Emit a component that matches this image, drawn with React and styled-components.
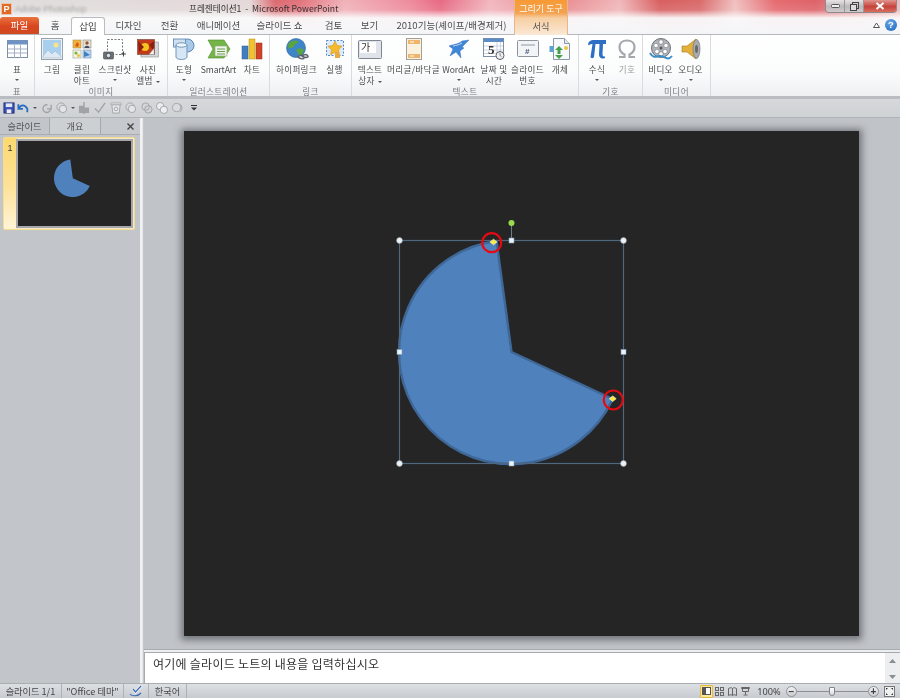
import React from "react";
import styled, { createGlobalStyle } from "styled-components";

const Global = createGlobalStyle`
  html, body { margin: 0; padding: 0; background: #c0c3c8; }
  body { font-family: "Noto Sans CJK KR", "Noto Sans", sans-serif; color: #3f4144; overflow: hidden; }
  * { box-sizing: border-box; }
`;

const Page = styled.div`
  width: 900px; height: 698px; display: flex; flex-direction: column; overflow: hidden;
  background: #c0c3c8; filter: blur(0.3px);
`;
const Top = styled.div`
  height: 35px; display: flex; flex-direction: column; position: relative;
  background:
    linear-gradient(to bottom, rgba(250,250,251,0) 0, rgba(250,250,251,.1) 10px, rgba(250,250,251,.95) 18px, #f4f5f7 35px),
    linear-gradient(to right, #dfdcdc 0, #e2dcdc 90px, #e4d8d8 250px, #dc6a70 275px, #e2737c 300px, #f0b3ba 345px, #ee8b9c 410px, #e76a82 440px, #f2b7bf 490px, #e98a90 560px, #f0b8ba 620px, #d85f60 660px, #d96a6a 700px, #f0c0c0 735px, #e56b70 775px, #dd6368 815px, #f0bcbc 900px);
`;
const BgGhost = styled.div`
  position: absolute; left: 15px; top: 2px; font: 9px/14px "Liberation Sans", sans-serif; color: #a9a9a9; filter: blur(.8px); white-space: nowrap;
`;
const TitleBar = styled.div`
  height: 17px; display: flex; align-items: center; position: relative; padding-left: 1px;
`;
const AppIcon = styled.div`
  width: 11px; height: 12px; border-radius: 1px; background: #e06a24; color: #fff; border: 1px solid #f3c3a8;
  font: bold 9px/10px "Liberation Sans", sans-serif; text-align: center;
`;
const Title = styled.div`
  position: absolute; left: 189px; top: 1px; font-size: 8.65px; line-height: 15px; color: #333; white-space: pre;
`;
const WinControls = styled.div`
  position: absolute; right: 3px; top: 0; width: 72px; height: 13px; display: flex;
  border: 1px solid #8b8b8f; border-top: 0; border-radius: 0 0 4px 4px; overflow: hidden;
`;
const WinBtn = styled.div`
  width: ${p => p.$w}px; height: 100%; display: flex; align-items: center; justify-content: center;
  background: ${p => p.$close ? "linear-gradient(#e0968f,#c5433a 55%,#d86f5f)" : "linear-gradient(#e8e4e4,#bdb9ba 55%,#cfcccc)"};
  border-right: ${p => p.$close ? "0" : "1px solid #98989a"};
`;
const Tabs = styled.div`
  height: 18px; display: flex; align-items: flex-end; position: relative; border-bottom: 1px solid #b4b7bb;
`;
const FileTab = styled.div`
  width: 39px; height: 17px; border-radius: 3px 3px 0 0; color: #fff; font-size: 9.5px; line-height: 17px; text-align: center;
  background: linear-gradient(#e9733d, #d9461f 55%, #ce4a22);
`;
const Tab = styled.div`
  width: ${p => p.$w}px; height: ${p => p.$active ? 18 : 17}px; font-size: 9.5px; line-height: 17px; text-align: center; white-space: nowrap;
  color: ${p => p.$active ? "#444" : "#4b4d50"}; position: relative; flex: none;
  ${p => p.$active && `background: #fff; border: 1px solid #b9bcc0; border-bottom: 0; border-radius: 3px 3px 0 0; margin-bottom: -1px; z-index: 1;`}
`;
const ContextTab = styled.div`
  position: absolute; left: 514px; top: -17px; width: 54px; height: 35px; display: flex; flex-direction: column; align-items: center;
  background: linear-gradient(#f79a35 0, #f4a250 13px, #f7cfa2 18px, #fae8d6 35px);
  border-left: 1px solid #e6b78a; border-right: 1px solid #e6b78a;
`;
const ContextTitle = styled.div`
  height: 17px; font-size: 9px; line-height: 17px; color: #fff; white-space: nowrap;
`;
const ContextName = styled.div`
  height: 18px; font-size: 9.2px; line-height: 18px; color: #55514d;
`;
const TopRight = styled.div`
  position: absolute; right: 3px; top: 2px; display: flex; align-items: center; gap: 5px;
`;
const HelpBtn = styled.div`
  width: 12px; height: 12px; border-radius: 50%; background: radial-gradient(circle at 40% 30%, #6aa7e6, #1a64c0); color: #fff;
  font: bold 9.5px/12px "Liberation Sans", sans-serif; text-align: center;
`;
const Ribbon = styled.div`
  height: 64px; display: flex; flex: none; background: linear-gradient(#ffffff 0, #fbfcfc 60%, #eff0f2 100%);
  border-bottom: 3px solid #b9bcc1;
`;
const Group = styled.div`
  width: ${p => p.$w}px; flex: none; display: flex; flex-direction: column; border-right: 1px solid #d9dbde;
`;
const Items = styled.div`
  height: 51px; flex: none; display: flex; padding-left: ${p => p.$pad || 0}px;
`;
const Item = styled.div`
  width: ${p => p.$w}px; flex: none; display: flex; flex-direction: column; align-items: center; padding-top: 2px;
`;
const IconBox = styled.div`
  height: 24px; display: flex; align-items: center; justify-content: center; margin-bottom: 3px;
`;
const ItemText = styled.div`
  font-size: 8.6px; line-height: 11px; color: ${p => p.$muted ? "#9a9c9f" : "#4a4c4f"}; text-align: center; white-space: nowrap;
  letter-spacing: ${p => p.$latin ? "-.1px" : ".3px"};
`;
const BelowCaret = styled.div`
  height: 9px; line-height: 9px; display: flex; align-items: center; justify-content: center;
`;
const Caret = styled.span`
  display: inline-block; width: 0; height: 0; border: 2px solid transparent; border-top: 2.5px solid #555; border-bottom: 0; vertical-align: middle; margin-left: ${p => p.$ml ?? 0}px;
`;
const GroupLabel = styled.div`
  height: 10px; font-size: 8.6px; line-height: 10px; color: #7a7c80; text-align: center; letter-spacing: .4px;
`;
const QatBar = styled.div`
  height: 19px; flex: none; display: flex; align-items: center; padding-left: 3px;
  background: linear-gradient(#d6d8db, #cfd2d5); border-bottom: 1px solid #b0b3b7;
`;
const QatSlot = styled.div`
  width: ${p => p.$w || 14.5}px; height: 15px; flex: none; display: flex; align-items: center; justify-content: center;
`;
const Main = styled.div`
  flex: 1; display: flex; min-height: 0;
`;
const LeftPane = styled.div`
  width: 140px; flex: none; display: flex; flex-direction: column; background: #c2c5ca;
`;
const PaneTabs = styled.div`
  height: 17px; flex: none; display: flex; background: #c6c9cd; border-bottom: 1px solid #a9acb0;
`;
const PaneTab = styled.div`
  width: ${p => p.$w}px; font-size: 9.2px; line-height: 16px; text-align: center; flex: none;
  background: ${p => p.$active ? "#c2c5c9" : "#cdd0d3"}; border-right: 1px solid #a5a8ac; color: #505255;
`;
const PaneClose = styled.div`
  flex: 1; display: flex; align-items: center; justify-content: flex-end; padding-right: 6px;
`;
const ThumbRow = styled.div`
  margin: 2px 0 0 3px; width: 132px; height: 93px; flex: none; display: flex; border: 1px solid #f6dc8e; border-radius: 2px;
  background: linear-gradient(to bottom, #fdd96f 0, #fde29a 55%, #fff5d6 100%) left/13px 100% no-repeat, #f3e8c8;
  padding: 1px 1px 1px 0;
`;
const ThumbNum = styled.div`
  width: 12px; flex: none; font: 9px/14px "Liberation Sans", sans-serif; color: #3a3a3a; text-align: center; padding-top: 2px;
`;
const Thumb = styled.div`
  flex: 1; min-width: 0; background: #252525; border: 2px solid #a5a7aa; display: flex; align-items: stretch; justify-content: center;
`;
const ThumbArt = styled.svg`
  width: 100%; height: 100%; display: block;
`;
const Splitter = styled.div`
  width: 4px; flex: none; background: linear-gradient(to right, #eef0f1, #f4f5f6 50%, #b5b8bc);
`;
const RightCol = styled.div`
  flex: 1; display: flex; flex-direction: column; min-width: 0;
`;
const Canvas = styled.div`
  flex: 1; min-height: 0; background: #c0c3c8; padding: 13px 0 0 40px; border-bottom: 1px solid #a8abaf;
`;
const Slide = styled.div`
  width: 675px; height: 505px; background: #252525; position: relative;
  box-shadow: 0 1px 7px 3px rgba(62,64,70,.6);
`;
const NotesDivider = styled.div`
  height: 2px; flex: none; background: #eceef0;
`;
const Notes = styled.div`
  height: 31px; flex: none; display: flex; background: #fff; border-left: 1px solid #a6a9ad; border-top: 1px solid #a6a9ad;
`;
const NotesText = styled.div`
  flex: 1; padding: 3px 0 0 8px; font-size: 12px; line-height: 16px; color: #333; letter-spacing: .25px;
`;
const NotesScroll = styled.div`
  width: 15px; flex: none; background: #eceef0; display: flex; flex-direction: column; justify-content: space-between; align-items: center; padding: 6px 0 4px;
`;
const Status = styled.div`
  height: 15px; flex: none; display: flex; align-items: center; font-size: 9.2px; color: #45474a;
  background: linear-gradient(#dde0e3, #c7cacf); border-top: 1px solid #a9acb0;
`;
const StatusCell = styled.div`
  width: ${p => p.$w}px; height: 100%; flex: none; display: flex; align-items: center; justify-content: center; white-space: nowrap;
  border-right: 1px solid #aeb1b5; line-height: 14px;
`;
const StatusSpacer = styled.div`flex: 1;`;
const ViewBtn = styled.div`
  width: 13px; height: 13px; flex: none; display: flex; align-items: center; justify-content: center;
  ${p => p.$active && `background: #fde79a; border: 1px solid #e8b93b; border-radius: 1px;`}
`;
const FitBtn = styled.div`
  width: 15px; height: 13px; flex: none; margin: 0 3px 0 3px; display: flex; align-items: center; justify-content: center;
`;
const ZoomText = styled.div`
  width: 34px; text-align: center; font-size: 9.2px; flex: none; font-family: "Noto Sans", sans-serif;
`;
const ZoomCircle = styled.div`
  width: 11px; height: 11px; flex: none; border-radius: 50%; border: 1px solid #8d9094; background: linear-gradient(#f2f3f4, #c9ccd0);
  color: #3d3f42; font: bold 10px/9px "Liberation Sans", sans-serif; text-align: center;
`;
const ZoomTrack = styled.div`
  width: 71px; height: 1px; flex: none; background: #8c8f93; position: relative;
`;
const ZoomThumb = styled.div`
  position: absolute; left: 32px; top: -4px; width: 6px; height: 9px; background: linear-gradient(#fff, #d8dade); border: 1px solid #7f8286; border-radius: 1px 1px 3px 3px;
`;
const MathGlyph = styled.svg`
  width: ${p => p.$w}px; height: 22px; display: block;
`;
const SelectionArt = styled.svg`
  position: absolute; left: 0; top: 0; width: 675px; height: 505px; overflow: visible;
`;

const Ic = ({ w = 22, h = 22, children }) => <svg width={w} height={h} viewBox={`0 0 ${w} ${h}`} fill="none">{children}</svg>;

const TableIcon = () => (
  <Ic w={21} h={18}>
    <rect x="0.5" y="0.5" width="20" height="17" fill="#fff" stroke="#7f8fa6" />
    <rect x="0.5" y="0.5" width="20" height="4" fill="#6f94c4" />
    <path d="M7.5 5v13M13.5 5v13M1 9h19M1 13h19" stroke="#a4b1c4" />
  </Ic>
);
const PictureIcon = () => (
  <Ic>
    <rect x="0.5" y="0.5" width="21" height="21" fill="#eef1f4" stroke="#9aa3ad" />
    <rect x="2" y="2" width="18" height="18" fill="#a9cfee" />
    <circle cx="15" cy="7" r="2.5" fill="#fbe389" />
    <path d="M2 18l5-6 4 4 3-3 6 5v2H2z" fill="#dfe9f3" stroke="#8fb0cf" strokeWidth=".5" />
  </Ic>
);
const ClipIcon = () => (
  <Ic w={20} h={20}>
    <rect x="1" y="1" width="8" height="8" fill="#f2b338" stroke="#a88f5b" strokeWidth=".6" />
    <path d="M3 7l2-4 2 2-1 3z" fill="#d95a26" />
    <rect x="11" y="1" width="8" height="8" fill="#e5e1d3" stroke="#8a8a80" strokeWidth=".6" />
    <circle cx="15" cy="4" r="1.7" fill="#a0522d" /><path d="M12.5 9c0-3 5-3 5 0z" fill="#3d4a6b" />
    <rect x="1" y="11" width="8" height="8" fill="#f4f4e4" stroke="#9aa08a" strokeWidth=".6" />
    <circle cx="4" cy="14" r="1.6" fill="#7cb342" /><circle cx="6.5" cy="16.5" r="1.6" fill="#e8c64a" />
    <rect x="11" y="11" width="8" height="8" fill="#b9d4ee" stroke="#6e8fae" strokeWidth=".6" />
    <path d="M12 12l6 4-6 2z" fill="#3f7fc0" />
  </Ic>
);
const ScreenIcon = () => (
  <Ic w={24} h={22}>
    <rect x="4.5" y="1.5" width="15" height="15" stroke="#777" strokeDasharray="2 1.5" />
    <rect x="0.5" y="14" width="10" height="7" rx="1" fill="#6d7176" stroke="#43464a" strokeWidth=".6" />
    <circle cx="5.5" cy="17.5" r="2.2" fill="#d7e3ee" stroke="#33363a" strokeWidth=".7" />
    <path d="M18 16h5M20.5 13.5v5" stroke="#444" />
  </Ic>
);
const AlbumIcon = () => (
  <Ic w={22} h={20}>
    <rect x="4" y="3" width="17.5" height="15" fill="#d3d6da" stroke="#8e8f92" strokeWidth=".6" />
    <rect x="0.5" y="0.5" width="17" height="15" fill="#c23a1a" stroke="#6d4333" strokeWidth=".6" />
    <circle cx="8" cy="8" r="4" fill="#f6c51d" />
    <path d="M1 2l6 6-5 5zM17 2l-5 4 5 6z" fill="#8c1f10" />
    <path d="M12 15.5l5-6v6z" fill="#f6f6f6" stroke="#999" strokeWidth=".5" />
  </Ic>
);
const ShapesIcon = () => (
  <Ic>
    <circle cx="14.5" cy="7.5" r="6.5" fill="#a9c9e8" stroke="#5c89b8" />
    <rect x="0.5" y="1" width="12" height="8" fill="#cfe0f1" stroke="#6f95bc" />
    <path d="M3 7v12c0 1.3 2.5 2.5 5.5 2.5S14 20.3 14 19V7z" fill="#d7e6f4" stroke="#6f95bc" />
    <ellipse cx="8.5" cy="7" rx="5.5" ry="2.2" fill="#eef5fb" stroke="#6f95bc" />
  </Ic>
);
const SmartIcon = () => (
  <Ic w={24} h={20}>
    <path d="M1 1h16l6 9-6 9H1l5-9z" fill="#75b548" stroke="#4f8a2b" strokeWidth=".6" />
    <rect x="8" y="7" width="12" height="10" fill="#eef4e8" stroke="#8aa676" strokeWidth=".6" />
    <path d="M10 10h8M10 12.5h8M10 15h8" stroke="#6d9a55" />
  </Ic>
);
const ChartIcon = () => (
  <Ic>
    <rect x="1" y="8" width="6" height="13" fill="#3f7fbf" stroke="#2d5f90" strokeWidth=".5" />
    <rect x="8" y="1" width="6" height="20" fill="#f2c22e" stroke="#b58e14" strokeWidth=".5" />
    <rect x="15" y="5" width="6" height="16" fill="#cf4327" stroke="#98301b" strokeWidth=".5" />
  </Ic>
);
const GlobeIcon = () => (
  <Ic w={24} h={22}>
    <circle cx="11" cy="10" r="9.5" fill="#3f86c9" stroke="#27618f" strokeWidth=".6" />
    <path d="M4 5c3-3 7-3 9-2 0 3-3 2-4 5s-4 1-5 3c-1-2-1-4 0-6zM12 11c3-1 6 0 7 1-1 3-3 6-5 6 0-3-3-4-2-7z" fill="#5aa53c" />
    <path d="M13 19c2-2.5 5-2.5 6 0s-4 2.5-6 0zM17 18c2-2 5-2 6 0s-4 2-6 0z" stroke="#5a6068" strokeWidth="1.3" fill="#d9dce0" />
  </Ic>
);
const ActionIcon = () => (
  <Ic w={20} h={20}>
    <rect x="1.5" y="1.5" width="17" height="15" fill="#dfeaf6" stroke="#4c8bd0" strokeDasharray="2 1.5" />
    <path d="M10 2l2.2 4.500 5 .7-3.600 3.500.8 5L10 13.300 5.600 15.700l.8-5L2.800 7.200l5-.7z" fill="#f4ba2c" stroke="#c88a13" strokeWidth=".5" />
    <path d="M10 14c1-2 2-2 3 0l2 1v4h-5z" fill="#e9a942" />
  </Ic>
);
const TextBoxIcon = () => (
  <Ic w={24} h={19}>
    <rect x="0.5" y="0.5" width="23" height="18" rx="1" fill="#dfe4ea" stroke="#7f868e" />
    <path d="M2 2h16v11H2z" fill="#fff" />
    <text x="3" y="11" fontSize="10" fill="#333" fontFamily="Noto Sans CJK KR">가</text>
  </Ic>
);
const HeaderIcon = () => (
  <Ic w={18} h={22}>
    <rect x="1.5" y="0.5" width="15" height="21" fill="#faf1df" stroke="#a3a09a" />
    <rect x="3" y="2" width="12" height="4" fill="#efb56b" />
    <rect x="3" y="16" width="12" height="4" fill="#efb56b" />
    <path d="M5 4h4M5 18h4" stroke="#fff" />
  </Ic>
);
const WordArtIcon = () => (
  <Ic w={22} h={20}>
    <path d="M1 7c6-2 10-2 13-5l7-1-7 7 2 1-4 3 1 7-5-6-6 4 3-7z" fill="#3e86d8" stroke="#2a68b0" strokeWidth=".4" />
    <path d="M5 7c3-.5 6-1 9-3" stroke="#bcd9f5" />
  </Ic>
);
const DateIcon = () => (
  <Ic>
    <rect x="0.5" y="0.5" width="20" height="18" fill="#fff" stroke="#7f8fa6" />
    <rect x="0.5" y="0.5" width="20" height="3.5" fill="#5c8cc6" />
    <path d="M14 4v14M17.500 4v14M1 8h19M1 12h19M1 15.500h19" stroke="#b7c4d6" strokeWidth=".7" />
    <text x="5" y="16" fontSize="13" fontWeight="700" fontFamily="Liberation Serif" fill="#333">5</text>
    <circle cx="17" cy="17.5" r="4" fill="#eef0f2" stroke="#5b6167" />
    <path d="M17 15v2.500l1.500 1" stroke="#444" strokeWidth=".6" />
  </Ic>
);
const NumberIcon = () => (
  <Ic w={22} h={18}>
    <rect x="0.5" y="0.5" width="21" height="16" rx="1" fill="#f2f4f7" stroke="#8d949c" />
    <rect x="4" y="4" width="14" height="2" fill="#c3c7cd" />
    <text x="8" y="14" fontSize="8" fontWeight="700" fontFamily="Liberation Sans" fill="#44587a">#</text>
  </Ic>
);
const ObjectIcon = () => (
  <Ic>
    <path d="M4.500 0.500h11l5 5v16h-16z" fill="#f6f8fb" stroke="#8c98a8" />
    <path d="M15.500 0.500v5h5" fill="#dfe6ee" stroke="#8c98a8" />
    <path d="M10 8l-4 4h2.500v4h3v-4H14z" fill="#46a04a" />
    <path d="M10 21l-4-4h8z" fill="#46a04a" />
    <rect x="0.5" y="8" width="4" height="6" fill="#5aa3d8" />
    <circle cx="17" cy="10" r="2" fill="#e8c64a" />
  </Ic>
);
const VideoIcon = () => (
  <Ic w={24} h={23}>
    <circle cx="12" cy="10" r="9.5" fill="#aeb4ba" stroke="#6b7177" />
    {[[12,4],[7,7.5],[17,7.5],[8,13.5],[16,13.5],[12,16]].map(([x, y]) => <circle key={x + "," + y} cx={x} cy={y} r="2.2" fill="#fff" stroke="#5f656b" strokeWidth=".5" />)}
    <circle cx="12" cy="10" r="1.5" fill="#555" />
    <path d="M1 15c4 7 8 2 11 3 4 1 7 5 11 0" stroke="#3c90c9" strokeWidth="2" />
  </Ic>
);
const AudioIcon = () => (
  <Ic w={20} h={22}>
    <path d="M1 8h5l9-7c2 3 2 17 0 20l-9-7H1z" fill="#e3b13b" stroke="#a27c1b" strokeWidth=".6" />
    <ellipse cx="15.5" cy="11" rx="3.5" ry="9.5" fill="#a9abae" stroke="#6a6c6f" strokeWidth=".6" />
    <ellipse cx="15.5" cy="11" rx="1.5" ry="4" fill="#66686b" />
  </Ic>
);
const PiIcon = () => (
  <MathGlyph $w={20} viewBox="0 0 20 22" fill="none">
    <path d="M1 6c1-3 3-4 5-4h13v4h-3l-.5 10c0 2 .5 2.500 2.500 2.500v1.500c-3 1.500-6 0-6-3.500L12.500 6H8.500L7 19c-.2 1.500-3.500 1.500-3.500 0L5.500 6C4 6 2.500 6.500 1.800 7.500z" fill="#2c6fc4" />
  </MathGlyph>
);
const OmegaIcon = () => (
  <MathGlyph $w={20} viewBox="0 0 20 22" fill="none">
    <path d="M2 19h5.500v-2.500C4.500 15 2.500 12.500 2.500 9 2.500 5 5.500 2.500 10 2.500S17.500 5 17.500 9c0 3.500-2 6-5 7.500V19H18" stroke="#a4a8ac" strokeWidth="2.2" />
  </MathGlyph>
);

const RibbonItem = ({ w, icon, lines, caret, muted, latin }) => (
  <Item $w={w}>
    <IconBox>{icon}</IconBox>
    {lines.map((l, i) => <ItemText key={i} $muted={muted} $latin={latin}>{l}{caret === "inline" && i === lines.length - 1 && <Caret $ml={3} />}</ItemText>)}
    {caret === "below" && <BelowCaret><Caret /></BelowCaret>}
  </Item>
);

const Q = ({ children }) => <svg width="12" height="12" viewBox="0 0 13 13" fill="none">{children}</svg>;
const gc = "#a0a4a8";
const Disc = () => <Q><circle cx="5.5" cy="5.5" r="4.5" fill="#d9dbde" stroke={gc} /><circle cx="7.5" cy="7.5" r="4" fill="#e3e5e7" stroke={gc} /></Q>;

const pieD = "M312.5 110 A112 112 0 1 0 428.7 268 L327.5 221 Z";

const Handle = ({ x, y, sq }) => sq
  ? <rect x={x - 2.5} y={y - 2.5} width="5" height="5" fill="#eaf3fb" stroke="#7f98b0" strokeWidth=".6" />
  : <circle cx={x} cy={y} r="2.9" fill="#eef1f3" stroke="#8ea2b4" strokeWidth=".6" />;
const Diamond = ({ x, y }) => <path d={`M${x - 3.5} ${y}L${x} ${y - 2.8}L${x + 3.5} ${y}L${x} ${y + 2.8}Z`} fill="#fbea3c" stroke="#fffbe0" strokeWidth=".6" />;
const Ring = ({ x, y }) => <circle cx={x} cy={y} r="9.5" fill="none" stroke="#e60b12" strokeWidth="2.2" />;

export default function App() {
  return (
    <Page>
      <Global />
      <Top>
        <TitleBar>
          <AppIcon>P</AppIcon>
          <BgGhost>Adobe Photoshop</BgGhost>
          <Title>프레젠테이션1  -  Microsoft PowerPoint</Title>
          <WinControls>
            <WinBtn $w={20}><svg width="9" height="4"><rect x=".5" y=".5" width="8" height="3" rx="1" fill="#eee" stroke="#555" /></svg></WinBtn>
            <WinBtn $w={19}><svg width="9" height="9" fill="none"><rect x="2.5" y=".5" width="6" height="6" stroke="#444" /><rect x=".5" y="2.5" width="6" height="6" fill="#ddd" stroke="#444" /></svg></WinBtn>
            <WinBtn $w={33} $close><svg width="10" height="8"><path d="M1.5 1l7 6M8.500 1l-7 6" stroke="#fff" strokeWidth="2" /></svg></WinBtn>
          </WinControls>
        </TitleBar>
        <Tabs>
          <FileTab>파일</FileTab>
          <Tab $w={32}>홈</Tab>
          <Tab $w={34} $active>삽입</Tab>
          <Tab $w={47}>디자인</Tab>
          <Tab $w={35}>전환</Tab>
          <Tab $w={63}>애니메이션</Tab>
          <Tab $w={59}>슬라이드 쇼</Tab>
          <Tab $w={49}>검토</Tab>
          <Tab $w={23}>보기</Tab>
          <Tab $w={141}>2010기능(셰이프/배경제거)</Tab>
          <ContextTab>
            <ContextTitle>그리기 도구</ContextTitle>
            <ContextName>서식</ContextName>
          </ContextTab>
          <TopRight>
            <svg width="7" height="6" fill="none"><path d="M.5 5.500L3.500 1l3 4.500z" fill="#fff" stroke="#555" /></svg>
            <HelpBtn>?</HelpBtn>
          </TopRight>
        </Tabs>
      </Top>
      <Ribbon>
        <Group $w={35}>
          <Items><RibbonItem w={34} icon={<TableIcon />} lines={["표"]} caret="below" /></Items>
          <GroupLabel>표</GroupLabel>
        </Group>
        <Group $w={133}>
          <Items $pad={2}>
            <RibbonItem w={30} icon={<PictureIcon />} lines={["그림"]} />
            <RibbonItem w={30} icon={<ClipIcon />} lines={["클립", "아트"]} />
            <RibbonItem w={36} icon={<ScreenIcon />} lines={["스크린샷"]} caret="below" />
            <RibbonItem w={30} icon={<AlbumIcon />} lines={["사진", "앨범"]} caret="inline" />
          </Items>
          <GroupLabel>이미지</GroupLabel>
        </Group>
        <Group $w={102}>
          <Items>
            <RibbonItem w={32} icon={<ShapesIcon />} lines={["도형"]} caret="below" />
            <RibbonItem w={37} icon={<SmartIcon />} lines={["SmartArt"]} latin />
            <RibbonItem w={30} icon={<ChartIcon />} lines={["차트"]} />
          </Items>
          <GroupLabel>일러스트레이션</GroupLabel>
        </Group>
        <Group $w={82}>
          <Items $pad={3}>
            <RibbonItem w={47} icon={<GlobeIcon />} lines={["하이퍼링크"]} />
            <RibbonItem w={29} icon={<ActionIcon />} lines={["실행"]} />
          </Items>
          <GroupLabel>링크</GroupLabel>
        </Group>
        <Group $w={227}>
          <Items>
            <RibbonItem w={36} icon={<TextBoxIcon />} lines={["텍스트", "상자"]} caret="inline" />
            <RibbonItem w={51} icon={<HeaderIcon />} lines={["머리글/바닥글"]} />
            <RibbonItem w={39} icon={<WordArtIcon />} lines={["WordArt"]} caret="below" latin />
            <RibbonItem w={32} icon={<DateIcon />} lines={["날짜 및", "시간"]} />
            <RibbonItem w={35} icon={<NumberIcon />} lines={["슬라이드", "번호"]} />
            <RibbonItem w={30} icon={<ObjectIcon />} lines={["개체"]} />
          </Items>
          <GroupLabel>텍스트</GroupLabel>
        </Group>
        <Group $w={64}>
          <Items $pad={2}>
            <RibbonItem w={32} icon={<PiIcon />} lines={["수식"]} caret="below" />
            <RibbonItem w={28} icon={<OmegaIcon />} lines={["기호"]} muted />
          </Items>
          <GroupLabel>기호</GroupLabel>
        </Group>
        <Group $w={68}>
          <Items $pad={2}>
            <RibbonItem w={31} icon={<VideoIcon />} lines={["비디오"]} caret="below" />
            <RibbonItem w={29} icon={<AudioIcon />} lines={["오디오"]} caret="below" />
          </Items>
          <GroupLabel>미디어</GroupLabel>
        </Group>
      </Ribbon>
      <QatBar>
        <QatSlot $w={12}><Q><rect x="1" y="1" width="11" height="11" fill="#3a4fb5" stroke="#242f78" /><rect x="3" y="1.5" width="7" height="4" fill="#dfe8f5" /><rect x="4" y="8" width="5" height="4" fill="#eee" /></Q></QatSlot>
        <QatSlot $w={16}><Q><path d="M1.5 2.5v5h5M2 7c2-4 6-5 9 0 .5 1 .5 2 0 4" stroke="#2a6bc4" strokeWidth="2" /></Q></QatSlot>
        <QatSlot $w={8}><Caret /></QatSlot>
        <QatSlot $w={16}><Q><path d="M11 3v4.500H6.500M10.500 7A4.200 4.200 0 1 1 7 3" stroke={gc} strokeWidth="1.5" /></Q></QatSlot>
        <QatSlot $w={14}><Disc /></QatSlot>
        <QatSlot $w={7}><Caret /></QatSlot>
        <QatSlot $w={16}><Q><rect x="1" y="4" width="5" height="8" fill={gc} /><rect x="7" y="6" width="5" height="6" fill={gc} /><path d="M6.500 0v13" stroke="#888" /></Q></QatSlot>
        <QatSlot $w={16}><Q><path d="M1 7l4 4 7-10" stroke={gc} strokeWidth="1.5" /></Q></QatSlot>
        <QatSlot $w={15}><Q><path d="M2 3h9l-1 9H3z" fill="#e8e9eb" stroke={gc} /><rect x="1" y="1" width="11" height="2" fill="#ddd" stroke={gc} strokeWidth=".7" /><circle cx="6.500" cy="7.500" r="2" stroke={gc} /></Q></QatSlot>
        <QatSlot $w={16}><Disc /></QatSlot>
        <QatSlot $w={15}><Q><circle cx="5" cy="5" r="4" stroke={gc} /><circle cx="8" cy="8" r="4" stroke={gc} /></Q></QatSlot>
        <QatSlot $w={16}><Q><circle cx="4.500" cy="4.500" r="4" fill="#eceef0" stroke={gc} /><circle cx="8.500" cy="8.500" r="4" fill="#eceef0" stroke={gc} /></Q></QatSlot>
        <QatSlot $w={16}><Q><circle cx="5" cy="6" r="4.500" fill="#d9dbde" stroke={gc} /><path d="M8 2a5 5 0 0 1 0 9" stroke={gc} /></Q></QatSlot>
        <QatSlot $w={15}><svg width="6" height="6"><path d="M0 .5h6" stroke="#333" /><path d="M0 2.500h6l-3 3z" fill="#333" /></svg></QatSlot>
      </QatBar>
      <Main>
        <LeftPane>
          <PaneTabs>
            <PaneTab $w={50} $active>슬라이드</PaneTab>
            <PaneTab $w={51}>개요</PaneTab>
            <PaneClose><svg width="7" height="7"><path d="M.5.5l6 6M6.500.5l-6 6" stroke="#444" strokeWidth="1.4" /></svg></PaneClose>
          </PaneTabs>
          <ThumbRow>
            <ThumbNum>1</ThumbNum>
            <Thumb>
              <ThumbArt viewBox="0 0 675 505" preserveAspectRatio="none"><path d={pieD} fill="#4f81bd" /></ThumbArt>
            </Thumb>
          </ThumbRow>
        </LeftPane>
        <Splitter />
        <RightCol>
          <Canvas>
            <Slide>
              <SelectionArt viewBox="0 0 675 505">
                <path d={pieD} fill="#4f81bd" stroke="#3f6797" strokeWidth="2.4" strokeLinejoin="round" />
                <rect x="215.5" y="109.5" width="224" height="223" fill="none" stroke="#4e6880" strokeWidth="1.2" />
                <path d="M327.5 109V92" stroke="#6d7d8c" />
                <circle cx="327.5" cy="92" r="3" fill="#9bd94f" />
                <Handle x={215.5} y={109.5} />
                <Handle x={439.5} y={109.5} />
                <Handle x={215.5} y={332.5} />
                <Handle x={439.5} y={332.5} />
                <Handle x={327.5} y={109.5} sq />
                <Handle x={215.5} y={221} sq />
                <Handle x={439.5} y={221} sq />
                <Handle x={327.5} y={332.5} sq />
                <Diamond x={309.5} y={111} />
                <Diamond x={428.7} y={267.7} />
                <Ring x={307.7} y={111.7} />
                <Ring x={429.3} y={269} />
              </SelectionArt>
            </Slide>
          </Canvas>
          <NotesDivider />
          <Notes>
            <NotesText>여기에 슬라이드 노트의 내용을 입력하십시오</NotesText>
            <NotesScroll>
              <svg width="7" height="4"><path d="M0 4l3.500-4L7 4z" fill="#8a8d91" /></svg>
              <svg width="7" height="4"><path d="M0 0l3.500 4L7 0z" fill="#8a8d91" /></svg>
            </NotesScroll>
          </Notes>
        </RightCol>
      </Main>
      <Status>
        <StatusCell $w={62}>슬라이드 1/1</StatusCell>
        <StatusCell $w={62}>"Office 테마"</StatusCell>
        <StatusCell $w={25}><svg width="14" height="12" fill="none"><path d="M1 9c2 2.500 8 2.500 11-1" stroke="#3d6fb5" strokeWidth="1.2" /><path d="M4 4l2.500 3L12 1" stroke="#fff" strokeWidth="2.6" /><path d="M4 4l2.500 3L12 1" stroke="#3d6fb5" strokeWidth="1.4" /></svg></StatusCell>
        <StatusCell $w={38}>한국어</StatusCell>
        <StatusSpacer />
        <ViewBtn $active><svg width="9" height="8"><rect x=".5" y=".5" width="8" height="7" fill="#fff" stroke="#555" /><rect x="1" y="1" width="3" height="6" fill="#555" /></svg></ViewBtn>
        <ViewBtn><svg width="9" height="9" fill="none" stroke="#666"><rect x=".5" y=".5" width="3" height="3" /><rect x="5.500" y=".5" width="3" height="3" /><rect x=".5" y="5.500" width="3" height="3" /><rect x="5.500" y="5.500" width="3" height="3" /></svg></ViewBtn>
        <ViewBtn><svg width="9" height="9" fill="none" stroke="#666"><path d="M.5 1.500c2-1 3-1 4 0 1-1 2-1 4 0v7c-2-1-3-1-4 0-1-1-2-1-4 0zM4.500 1.500v7" /></svg></ViewBtn>
        <ViewBtn><svg width="9" height="9" fill="none" stroke="#666"><path d="M.5.500h8v1h-8zM1.500 1.500v3h6v-3M4.500 4.500v3M2.500 8h4" /></svg></ViewBtn>
        <ZoomText>100%</ZoomText>
        <ZoomCircle>−</ZoomCircle>
        <ZoomTrack><ZoomThumb /></ZoomTrack>
        <ZoomCircle>+</ZoomCircle>
        <FitBtn><svg width="11" height="11"><rect x=".5" y=".5" width="10" height="10" fill="#eef0f2" stroke="#777" /><path d="M2 2h2l-2 2zM9 2v2l-2-2zM2 9v-2l2 2zM9 9h-2l2-2z" fill="#333" /></svg></FitBtn>
      </Status>
    </Page>
  );
}
